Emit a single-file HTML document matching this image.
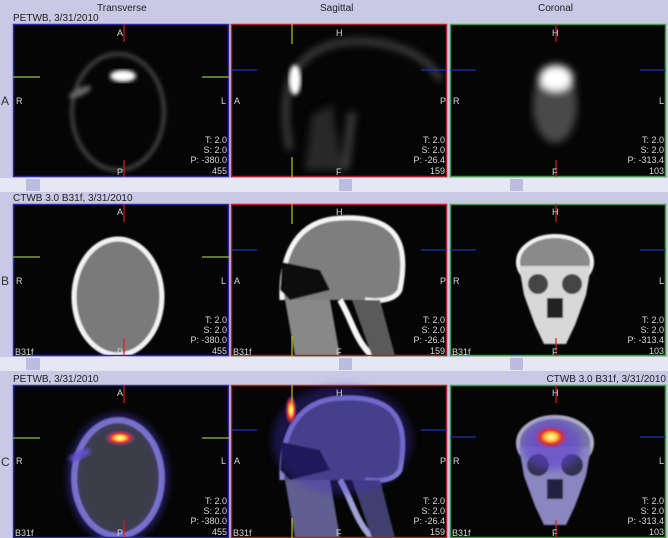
<!DOCTYPE html>
<html><head><meta charset="utf-8"><style>
html,body{margin:0;padding:0;background:#c9c9e6;}
svg{display:block;font-family:"Liberation Sans",sans-serif;}
</style></head><body>
<svg width="668" height="538" viewBox="0 0 668 538" xmlns="http://www.w3.org/2000/svg">
<defs>
<filter id="b1"><feGaussianBlur stdDeviation="2"/></filter>
<filter id="b2"><feGaussianBlur stdDeviation="4"/></filter>
<filter id="b05"><feGaussianBlur stdDeviation="0.8"/></filter>
<radialGradient id="hot"><stop offset="0" stop-color="#fffbd0"/><stop offset="0.3" stop-color="#ffd040"/><stop offset="0.6" stop-color="#e03030"/><stop offset="1" stop-color="#8040c0" stop-opacity="0"/></radialGradient>
</defs>
<rect width="668" height="538" fill="#c9c9e6"/>
<rect x="0" y="178" width="668" height="14" fill="#e6e6f5"/>
<rect x="0" y="357" width="668" height="14" fill="#e6e6f5"/>
<rect x="26" y="179" width="14" height="12" fill="#bcbce0"/><rect x="339" y="179" width="13" height="12" fill="#bcbce0"/><rect x="510" y="179" width="13" height="12" fill="#bcbce0"/>
<rect x="26" y="358" width="14" height="12" fill="#bcbce0"/><rect x="339" y="358" width="13" height="12" fill="#bcbce0"/><rect x="510" y="358" width="13" height="12" fill="#bcbce0"/>
<g font-size="10" fill="#222">
<text x="97" y="11">Transverse</text><text x="320" y="11">Sagittal</text><text x="538" y="11">Coronal</text>
<text x="13" y="21">PETWB, 3/31/2010</text>
<text x="13" y="201">CTWB 3.0 B31f, 3/31/2010</text>
<text x="13" y="382">PETWB, 3/31/2010</text>
<text x="666" y="382" text-anchor="end">CTWB 3.0 B31f, 3/31/2010</text>
</g>
<g font-size="12" fill="#333"><text x="1" y="105">A</text><text x="1" y="285">B</text><text x="1" y="466">C</text></g>

<g fill="#050505">
<rect x="13" y="24" width="216" height="153"/><rect x="231" y="24" width="216" height="153"/><rect x="450" y="24" width="216" height="153"/>
<rect x="13" y="204" width="216" height="152"/><rect x="231" y="204" width="216" height="152"/><rect x="450" y="204" width="216" height="152"/>
<rect x="13" y="385" width="216" height="153"/><rect x="231" y="385" width="216" height="153"/><rect x="450" y="385" width="216" height="153"/>
</g>

<!-- ROW A (PET) -->
<g filter="url(#b1)">
<ellipse cx="118" cy="112" rx="46" ry="58" fill="none" stroke="#7a7a7a" stroke-width="3" opacity="0.7"/>
<ellipse cx="80" cy="92" rx="12" ry="4" fill="#666" transform="rotate(-25 80 92)"/>
</g>
<ellipse cx="123" cy="76" rx="13" ry="6" fill="#fff" filter="url(#b1)"/>
<g filter="url(#b2)" opacity="0.8">
<path d="M290 150 C280 100 285 60 330 45 C380 32 430 55 440 80" fill="none" stroke="#666" stroke-width="5"/>
<path d="M305 170 L312 115 L332 105 L342 170 Z" fill="#333"/>
<path d="M345 170 L352 112" stroke="#555" stroke-width="7"/>
</g>
<ellipse cx="295" cy="80" rx="6" ry="15" fill="#fff" filter="url(#b1)"/>
<g filter="url(#b2)">
<ellipse cx="555" cy="105" rx="22" ry="38" fill="#4a4a4a"/>
<ellipse cx="556" cy="78" rx="17" ry="13" fill="#fff"/>
</g>

<!-- ROW B (CT) -->
<ellipse cx="118" cy="297" rx="44" ry="58" fill="#7a7a7a" stroke="#f2f2f2" stroke-width="5" filter="url(#b05)"/>
<g filter="url(#b05)">
<path d="M282 300 C280 250 300 220 340 218 C395 215 410 240 400 290 C395 300 380 302 365 300" fill="#7e7e7e" stroke="#f5f5f5" stroke-width="5"/>
<path d="M282 262 L320 270 L330 290 L290 300 L280 290 Z" fill="#080808"/>
<path d="M285 300 L330 300 L340 356 L295 356 Z" fill="#888"/>
<path d="M340 300 C352 320 355 340 372 356" stroke="#f5f5f5" stroke-width="6" fill="none"/>
<path d="M352 300 L380 300 L395 356 L372 356 Z" fill="#5a5a5a"/>
</g>
<g filter="url(#b05)">
<ellipse cx="555" cy="262" rx="37" ry="26" fill="#8a8a8a" stroke="#f2f2f2" stroke-width="4"/>
<path d="M519 266 L591 266 L586 295 L575 325 L566 344 L544 344 L535 325 L524 295 Z" fill="#d8d8d8"/>
<circle cx="538" cy="284" r="10" fill="#444"/><circle cx="572" cy="284" r="10" fill="#444"/>
<rect x="547" y="298" width="16" height="20" fill="#222"/>
</g>

<!-- ROW C (fused) -->
<g filter="url(#b05)">
<ellipse cx="118" cy="478" rx="44" ry="58" fill="#3c3c4a" stroke="#8a86c8" stroke-width="6"/>
</g>
<ellipse cx="118" cy="478" rx="46" ry="60" fill="none" stroke="#5040d0" stroke-width="8" opacity="0.5" filter="url(#b2)"/>
<ellipse cx="80" cy="455" rx="12" ry="4" fill="#6050d0" transform="rotate(-25 80 455)" filter="url(#b1)"/>
<ellipse cx="120" cy="438" rx="16" ry="8" fill="url(#hot)"/>
<g filter="url(#b05)">
<path d="M282 480 C280 430 300 400 340 398 C395 395 410 420 400 470 C395 480 380 482 365 480" fill="#4a4a70" stroke="#8a86d0" stroke-width="5"/>
<path d="M282 442 L320 450 L330 470 L290 480 L280 470 Z" fill="#101020"/>
<path d="M285 480 L330 480 L340 538 L295 538 Z" fill="#606090"/>
<path d="M340 480 C352 500 355 520 372 538" stroke="#a0a0d8" stroke-width="6" fill="none"/>
<path d="M352 480 L380 480 L395 538 L372 538 Z" fill="#404070"/>
</g>
<ellipse cx="342" cy="440" rx="70" ry="55" fill="#4030c0" opacity="0.35" filter="url(#b2)"/>
<ellipse cx="291" cy="410" rx="6" ry="15" fill="url(#hot)"/>
<g filter="url(#b05)">
<ellipse cx="555" cy="443" rx="37" ry="26" fill="#7a76a8" stroke="#b0b0c8" stroke-width="4"/>
<path d="M519 447 L591 447 L586 476 L575 506 L566 525 L544 525 L535 506 L524 476 Z" fill="#8a86c0"/>
<circle cx="538" cy="465" r="11" fill="#303050"/><circle cx="572" cy="465" r="11" fill="#303050"/>
<rect x="547" y="479" width="16" height="20" fill="#202040"/>
</g>
<ellipse cx="552" cy="445" rx="30" ry="25" fill="#6040d0" opacity="0.6" filter="url(#b2)"/>
<ellipse cx="551" cy="437" rx="18" ry="12" fill="url(#hot)"/>

<g fill="none" stroke-width="1.5">
<rect x="13.5" y="24.5" width="215" height="152" stroke="#2c2ca0"/><rect x="231.5" y="24.5" width="215" height="152" stroke="#b02020"/><rect x="450.5" y="24.5" width="215" height="152" stroke="#40a040"/>
<rect x="13.5" y="204.5" width="215" height="151" stroke="#2c2ca0"/><rect x="231.5" y="204.5" width="215" height="151" stroke="#b02020"/><rect x="450.5" y="204.5" width="215" height="151" stroke="#40a040"/>
<rect x="13.5" y="385.5" width="215" height="152" stroke="#2c2ca0"/><rect x="231.5" y="385.5" width="215" height="152" stroke="#b02020"/><rect x="450.5" y="385.5" width="215" height="152" stroke="#40a040"/>
</g>

<g stroke-width="1.2">
<g stroke="#d02020"><path d="M124 24v18M124 160v17M124 204v18M124 338v18M124 385v18M124 520v18"/></g>
<g stroke="#90c040"><path d="M13 77h27M202 77h27M13 257h27M202 257h27M13 438h27M202 438h27"/></g>
<g stroke="#c0c020"><path d="M292 24v20M292 157v20M292 204v20M292 336v20M292 385v20M292 518v20"/></g>
<g stroke="#2030b0"><path d="M231 70h26M421 70h26M231 250h26M421 250h26M231 430h26M421 430h26"/></g>
<g stroke="#d02020"><path d="M556 24v18M556 160v17M556 204v18M556 338v18M556 385v18M556 520v18"/></g>
<g stroke="#2030b0"><path d="M450 70h26M640 70h26M450 437h26M640 437h26M450 250h26M640 250h26"/></g>
</g>

<g font-size="9" fill="#d8d8d8">
<text x="117" y="36">A</text><text x="117" y="175">P</text><text x="16" y="104">R</text><text x="221" y="104">L</text>
<text x="336" y="36">H</text><text x="336" y="175">F</text><text x="234" y="104">A</text><text x="440" y="104">P</text>
<text x="552" y="36">H</text><text x="552" y="175">F</text><text x="453" y="104">R</text><text x="659" y="104">L</text>
<text x="117" y="215">A</text><text x="117" y="355">P</text><text x="16" y="284">R</text><text x="221" y="284">L</text>
<text x="336" y="215">H</text><text x="336" y="355">F</text><text x="234" y="284">A</text><text x="440" y="284">P</text>
<text x="552" y="215">H</text><text x="552" y="355">F</text><text x="453" y="284">R</text><text x="659" y="284">L</text>
<text x="15" y="355">B31f</text><text x="233" y="355">B31f</text><text x="452" y="355">B31f</text>
<text x="117" y="396">A</text><text x="117" y="536">P</text><text x="16" y="464">R</text><text x="221" y="464">L</text>
<text x="336" y="396">H</text><text x="336" y="536">F</text><text x="234" y="464">A</text><text x="440" y="464">P</text>
<text x="552" y="396">H</text><text x="552" y="536">F</text><text x="453" y="464">R</text><text x="659" y="464">L</text>
<text x="15" y="536">B31f</text><text x="233" y="536">B31f</text><text x="452" y="536">B31f</text>
</g>
<g font-size="9" fill="#d8d8d8" text-anchor="end">
<text x="227" y="143">T: 2.0</text><text x="227" y="153">S: 2.0</text><text x="227" y="163">P: -380.0</text><text x="227" y="174">455</text>
<text x="445" y="143">T: 2.0</text><text x="445" y="153">S: 2.0</text><text x="445" y="163">P: -26.4</text><text x="445" y="174">159</text>
<text x="664" y="143">T: 2.0</text><text x="664" y="153">S: 2.0</text><text x="664" y="163">P: -313.4</text><text x="664" y="174">103</text>
<text x="227" y="323">T: 2.0</text><text x="227" y="333">S: 2.0</text><text x="227" y="343">P: -380.0</text><text x="227" y="354">455</text>
<text x="445" y="323">T: 2.0</text><text x="445" y="333">S: 2.0</text><text x="445" y="343">P: -26.4</text><text x="445" y="354">159</text>
<text x="664" y="323">T: 2.0</text><text x="664" y="333">S: 2.0</text><text x="664" y="343">P: -313.4</text><text x="664" y="354">103</text>
<text x="227" y="504">T: 2.0</text><text x="227" y="514">S: 2.0</text><text x="227" y="524">P: -380.0</text><text x="227" y="535">455</text>
<text x="445" y="504">T: 2.0</text><text x="445" y="514">S: 2.0</text><text x="445" y="524">P: -26.4</text><text x="445" y="535">159</text>
<text x="664" y="504">T: 2.0</text><text x="664" y="514">S: 2.0</text><text x="664" y="524">P: -313.4</text><text x="664" y="535">103</text>
</g>
</svg>
</body></html>
